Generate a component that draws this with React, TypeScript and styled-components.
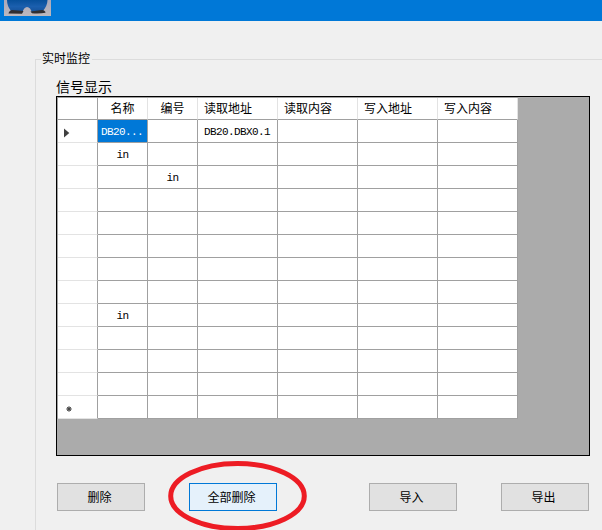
import React from 'react';
import styled, { createGlobalStyle, css } from 'styled-components';

const GlobalStyle = createGlobalStyle`
  * { box-sizing: border-box; }
  body {
    margin: 0;
    overflow: hidden;
    background: #f0f0f0;
    color: #000;
    font: 12px/16px "Noto Sans CJK SC", sans-serif;
  }
`;

const Window = styled.main`
  width: 602px;
  height: 530px;
  overflow: hidden;
  display: flex;
  flex-direction: column;
  background: #f0f0f0;
`;

const TitleBar = styled.header`
  flex: none;
  height: 21px;
  padding-left: 4px;
  background: #0078d7;
`;

const Mascot = styled.svg`
  display: block;
`;

const Group = styled.fieldset`
  flex: 1;
  min-width: 0;
  margin: 29px -10px -10px 35px;
  padding: 0 0 0 20px;
  border: 1px solid #dcdcdc;
`;

const GroupTitle = styled.legend`
  height: 19px;
  margin-left: -15px;
  padding: 0 2px 0 1px;
  line-height: 15px;
  white-space: nowrap;
`;

const GridLabel = styled.div`
  height: 27px;
  padding-top: 8px;
  font-size: 14px;
  line-height: 18px;
  white-space: nowrap;
`;

const DataView = styled.div`
  width: 534px;
  height: 360px;
  border: 1px solid #000;
  background: #ababab;
`;

const Table = styled.div`
  width: 461px;
  border-top: 1px solid #a0a0a0;
  border-left: 1px solid #a0a0a0;
`;

const Row = styled.div<{ $header?: boolean }>`
  display: grid;
  grid-template-columns: 40px 50px 50px repeat(4, 80px);
  height: ${(p) => (p.$header ? 22 : 23)}px;
`;

const cellBase = css`
  display: flex;
  align-items: center;
  overflow: hidden;
  white-space: pre;
  background: #fff;
  border-right: 1px solid #a0a0a0;
  border-bottom: 1px solid #a0a0a0;
`;

const HeadCell = styled.div<{ $wide?: boolean }>`
  ${cellBase}
  border-right-color: #e3e3e3;
  justify-content: ${(p) => (p.$wide ? 'flex-start' : 'center')};
  padding-left: ${(p) => (p.$wide ? 6 : 0)}px;
  padding-bottom: 1px;
`;

const CornerCell = styled.div`
  ${cellBase}
`;

const RowHead = styled.div`
  ${cellBase}
  border-bottom-color: #e3e3e3;
  padding: 3px 0 0 6px;
`;

const Cell = styled.div<{ $selected?: boolean; $left?: boolean }>`
  ${cellBase}
  justify-content: ${(p) => (p.$left ? 'flex-start' : 'center')};
  padding-left: ${(p) => (p.$selected ? 3 : p.$left ? 6 : 0)}px;
  padding-top: 1px;
  font-family: "Liberation Mono", monospace;
  font-size: 11px;
  letter-spacing: -0.6px;
  ${(p) => p.$selected && css`
    background: #0078d7;
    color: #fff;
  `}
`;

const Actions = styled.div`
  display: flex;
  width: 534px;
  padding: 27px 1px 0;
`;

const Button = styled.button<{ $active?: boolean; $gap?: number }>`
  flex: none;
  width: 88px;
  height: 28px;
  margin: 0 0 0 ${(p) => p.$gap ?? 0}px;
  padding: 0 3px 1px 0;
  border: 1px solid ${(p) => (p.$active ? '#0078d7' : '#adadad')};
  background: ${(p) => (p.$active ? '#e5f1fb' : '#e1e1e1')};
  color: #000;
  font: inherit;
  white-space: nowrap;
`;

const Highlighted = styled.div`
  position: relative;
  flex: none;
  margin-left: 44px;
`;

const Ring = styled.svg`
  position: absolute;
  left: -23px;
  top: -24px;
  pointer-events: none;
`;

const headers = ['名称', '编号', '读取地址', '读取内容', '写入地址', '写入内容'];

const rows: string[][] = Array.from({ length: 13 }, () => ['', '', '', '', '', '']);
rows[0][0] = 'DB20...';
rows[0][2] = 'DB20.DBX0.1';
rows[1][0] = 'in';
rows[2][1] = 'in';
rows[8][0] = 'in';

const MascotIcon = () => (
  <Mascot width="47" height="16" viewBox="0 0 47 16">
    <defs>
      <linearGradient id="backdrop" x1="0" y1="0" x2="0" y2="1">
        <stop offset="0" stopColor="#aaa8ba" />
        <stop offset="1" stopColor="#bdb8bd" />
      </linearGradient>
      <linearGradient id="trousers" x1="0" y1="0" x2="0" y2="1">
        <stop offset="0" stopColor="#07509b" />
        <stop offset="0.5" stopColor="#1b5fae" />
        <stop offset="1" stopColor="#154f96" />
      </linearGradient>
    </defs>
    <rect width="47" height="16" fill="url(#backdrop)" />
    <path d="M3 0H43.5C43.5 4 41.5 8 39 11L28 13Q26.5 7 23 7Q20 7 18 13L7 11Q3 6 3 0Z" fill="url(#trousers)" />
    <path d="M4.5 13.5Q5 10.5 8 10L19.5 11L18 13.8ZM26.5 11.5L38 10Q41.5 10.5 41.5 12.8Q35 14 28 13.3Z" fill="#302e32" />
  </Mascot>
);

const CurrentRowIcon = () => (
  <svg width="6" height="10" viewBox="0 0 6 10">
    <path d="M0 0.5L5.3 5L0 9.5Z" fill="#404040" />
  </svg>
);

const NewRowIcon = () => (
  <svg width="10" height="8" viewBox="0 0 10 8">
    <path d="M5 1V7M2 4H8M3 2L7 6M7 2L3 6" stroke="#686868" strokeWidth="1" />
    <rect x="3.4" y="2.4" width="3.2" height="3.2" fill="#484848" />
  </svg>
);

export default function App() {
  return (
    <Window>
      <GlobalStyle />
      <TitleBar><MascotIcon /></TitleBar>
      <Group>
        <GroupTitle>实时监控</GroupTitle>
        <GridLabel>信号显示</GridLabel>
        <DataView>
          <Table>
            <Row $header>
              <CornerCell />
              {headers.map((title, i) => (
                <HeadCell key={title} $wide={i > 1}>{title}</HeadCell>
              ))}
            </Row>
            {rows.map((row, r) => (
              <Row key={r}>
                <RowHead>
                  {r === 0 && <CurrentRowIcon />}
                  {r === rows.length - 1 && <NewRowIcon />}
                </RowHead>
                {row.map((value, c) => (
                  <Cell key={c} $selected={r === 0 && c === 0} $left={value.length > 2}>{value}</Cell>
                ))}
              </Row>
            ))}
          </Table>
        </DataView>
        <Actions>
          <Button>删除</Button>
          <Highlighted>
            <Button $active>全部删除</Button>
            <Ring width="142" height="72" viewBox="0 0 142 72">
              <ellipse cx="71.5" cy="37" rx="66.8" ry="32.5" fill="none" stroke="#ed1c24" strokeWidth="5" />
            </Ring>
          </Highlighted>
          <Button $gap={92}>导入</Button>
          <Button $gap={44}>导出</Button>
        </Actions>
      </Group>
    </Window>
  );
}
